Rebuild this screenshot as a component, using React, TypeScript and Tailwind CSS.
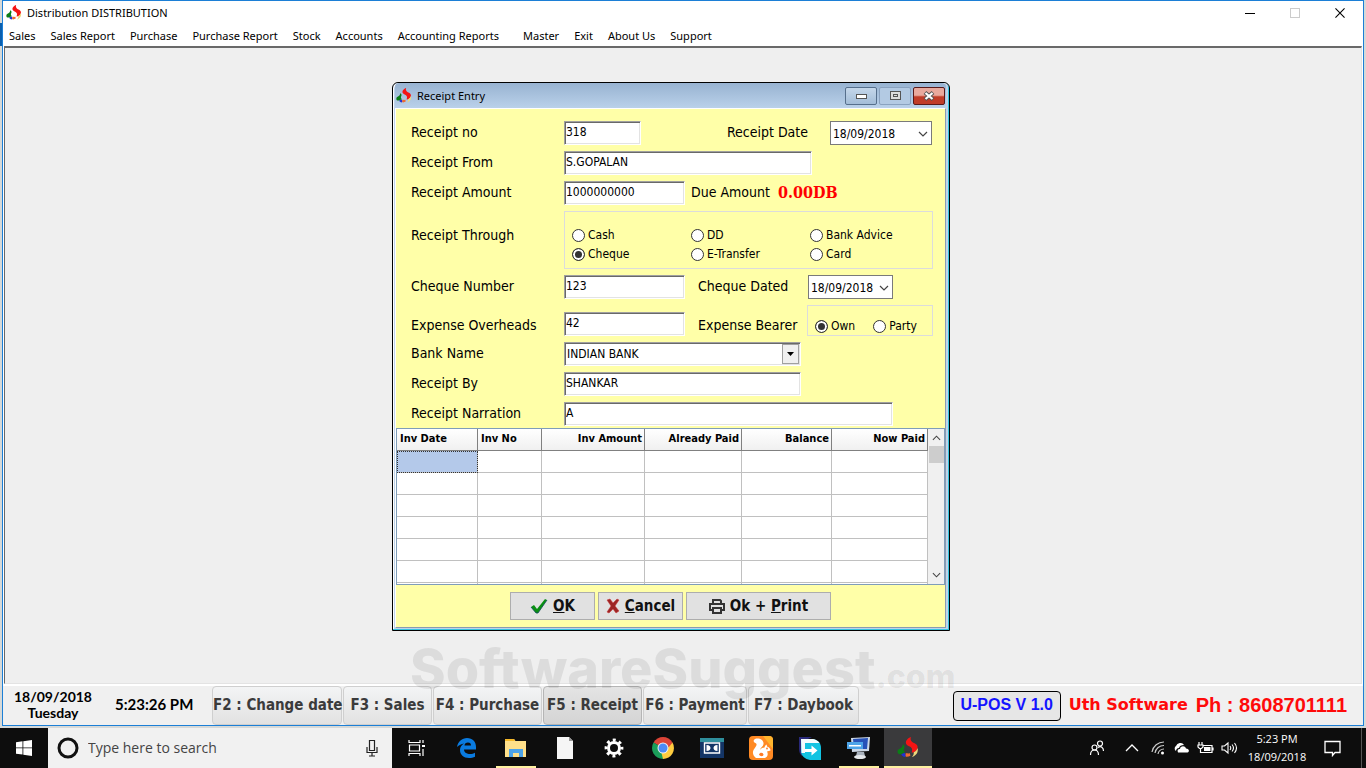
import { useState } from 'react'
import type { ReactNode } from 'react'

const MENUS = [
  'Sales',
  'Sales Report',
  'Purchase',
  'Purchase Report',
  'Stock',
  'Accounts',
  'Accounting Reports',
]
const MENUS_RIGHT = ['Master', 'Exit', 'About Us', 'Support']

const METHODS = ['Cash', 'DD', 'Bank Advice', 'Cheque', 'E-Transfer', 'Card']

const COLUMNS = [
  { name: 'Inv Date', className: 'w-[81px] text-left' },
  { name: 'Inv No', className: 'w-[64px] text-left' },
  { name: 'Inv Amount', className: 'w-[103px] text-right' },
  { name: 'Already Paid', className: 'w-[97px] text-right' },
  { name: 'Balance', className: 'w-[90px] text-right' },
  { name: 'Now Paid', className: 'w-[96px] text-right' },
]

const SHORTCUTS = [
  { label: 'F2 : Change date', className: 'w-[130px]' },
  { label: 'F3 : Sales', className: 'w-[89px]' },
  { label: 'F4 : Purchase', className: 'w-[109px]' },
  { label: 'F5 : Receipt', className: 'w-[99px]', active: true },
  { label: 'F6 : Payment', className: 'w-[104px]' },
  { label: 'F7 : Daybook', className: 'w-[111px]' },
]

const FIELD =
  'h-6 rounded-none border border-t-[#a0a0a0] border-r-white border-b-white border-l-[#a0a0a0] bg-white shadow-[inset_1px_1px_#696969,inset_-1px_-1px_#e3e3e3] outline-none'

function AppLogo({ className }: { className: string }) {
  return (
    <svg viewBox="0 0 23 23" className={className} aria-hidden="true">
      <path
        d="M14.500 0c-3 1-6 4-5 7 1 2.500 5 2.500 6 5 .6 1.500.3 3-.3 4.500 3-.5 6-2 6.300-5.500.2-3-2-4-4.500-5-2-1-3.500-3-2.500-6z"
        fill="#f51414"
      />
      <path d="M21.500 11.500c1 4-1 8-6 9.500 2-2 2-3 2-5 2-1 3.500-2.500 4-4.500z" fill="#ecd97c" />
      <path d="M6 7.500c2 1 2.300 2.500 1.500 4.500-.8 1.600-.5 3 1 4L4.500 18C2 18.500.3 17.500.5 15c.2-2 2-2.500 3.500-3.500C5.500 10.500 6 9 6 7.500z" fill="#0a7d16" />
      <path d="M4.500 18l3.500-1.500 1.500 3-1.500 1.500c-1.500-.5-3-1.500-3.500-3z" fill="#2032d0" />
      <path d="M9 17c1.500 0 3 .3 4.500 0l.5 2.500c-1.500 1-3.500 1.500-5 1z" fill="#ee6a30" />
    </svg>
  )
}

function Chevron({ className }: { className: string }) {
  return (
    <svg viewBox="0 0 10 6" className={className} fill="none" stroke="#444" strokeWidth="1.200" aria-hidden="true">
      <path d="M1 1l4 4 4-4" />
    </svg>
  )
}

function Row({
  label,
  htmlFor,
  labelClass = 'pb-[2px]',
  children,
}: {
  label: string
  htmlFor?: string
  labelClass?: string
  children: ReactNode
}) {
  return (
    <div className="flex items-center">
      <label htmlFor={htmlFor} className={`w-[153px] shrink-0 ${labelClass}`}>
        {label}
      </label>
      {children}
    </div>
  )
}

function TextField({ id, value, className }: { id: string; value: string; className: string }) {
  return <input id={id} type="text" defaultValue={value} className={`${FIELD} px-px pb-[2px] text-xs ${className}`} />
}

function DateField({ id, className }: { id: string; className: string }) {
  return (
    <div className={`relative ${className}`}>
      <select id={id} className="h-6 w-full appearance-none border border-[#7a7a7a] bg-white pt-px pl-0.5 text-xs outline-none">
        <option>18/09/2018</option>
      </select>
      <Chevron className="pointer-events-none absolute top-[10px] right-1 h-[6px] w-[10px]" />
    </div>
  )
}

function Radio({
  name,
  label,
  checked,
  onSelect,
}: {
  name: string
  label: string
  checked: boolean
  onSelect: () => void
}) {
  return (
    <label className="flex items-center gap-[3px] text-xs leading-4">
      <input
        type="radio"
        name={name}
        checked={checked}
        onChange={onSelect}
        className="size-[13px] appearance-none rounded-full border border-[#333] bg-white checked:bg-[#333] checked:shadow-[inset_0_0_0_2px_white]"
      />
      {label}
    </label>
  )
}

function InvoiceGrid() {
  return (
    <div className="flex h-[157px] overflow-hidden border border-[#7f9db9] bg-white">
      <div className="w-[531px] shrink-0 overflow-hidden">
        <table className="w-[531px] table-fixed border-separate border-spacing-0 text-[11px]">
          <thead>
            <tr>
              {COLUMNS.map((column) => (
                <th
                  key={column.name}
                  className={`h-[22px] border-r border-b border-[#808080] bg-linear-to-b from-white to-[#f0f0f0] pt-0 pr-[2px] pb-0 pl-[3px] font-bold ${column.className}`}
                >
                  {column.name}
                </th>
              ))}
            </tr>
          </thead>
          <tbody>
            {[0, 1, 2, 3, 4, 5, 6].map((row) => (
              <tr key={row}>
                {COLUMNS.map((column, index) => (
                  <td
                    key={column.name}
                    className={`h-[22px] border-r border-b border-[#c0c0c0] p-0 ${
                      row === 0 && index === 0 ? 'bg-[#b4c9ea] outline-1 -outline-offset-1 outline-dotted outline-[#333]' : ''
                    }`}
                  />
                ))}
              </tr>
            ))}
          </tbody>
        </table>
      </div>
      <div className="flex flex-1 flex-col items-center bg-[#f0f0f0] py-1.5">
        <Chevron className="h-[6px] w-[9px] rotate-180" />
        <div className="mt-[5px] h-[17px] w-[15px] bg-[#cdcdcd]" />
        <Chevron className="mt-auto h-[6px] w-[9px]" />
      </div>
    </div>
  )
}

function DialogButton({ className, icon, children }: { className: string; icon: ReactNode; children: ReactNode }) {
  return (
    <button
      type="button"
      className={`flex h-7 items-center justify-center gap-[5px] border border-[#adadad] bg-[#e1e1e1] text-[15px] font-bold text-[#111] ${className}`}
    >
      {icon}
      <span>{children}</span>
    </button>
  )
}

function ReceiptDialog() {
  const [method, setMethod] = useState('Cheque')
  const [bearer, setBearer] = useState('Own')

  return (
    <section className="absolute top-[34px] left-[387px] w-[558px] rounded-t-md border border-black bg-[#bfd4ea] pr-[3px] pb-[2px] pl-[2px] shadow-[inset_-1px_-1px_#35c5e0,inset_1px_1px_white]">
      <header className="flex h-[25px] items-center rounded-t bg-linear-to-b from-[#98b3d1] to-[#bad1ea] pr-px pl-px">
        <AppLogo className="size-4" />
        <h1 className="ml-[5px] flex-1 font-['Noto_Sans',sans-serif] text-[11px] leading-4">Receipt Entry</h1>
        <div className="flex gap-[2px]">
          <button
            type="button"
            aria-label="Minimize"
            className="flex h-[18px] w-8 items-center justify-center rounded-xs border border-[#566f8c] bg-linear-to-b from-[#c5d7ea] to-[#a3bdd8]"
          >
            <span className="mt-0.5 h-[5px] w-[11px] border border-[#555] bg-white" />
          </button>
          <button
            type="button"
            aria-label="Maximize"
            className="flex h-[18px] w-8 items-center justify-center rounded-xs border border-[#8aa2bf] bg-[#b3cae3]"
          >
            <span className="flex h-[9px] w-[11px] items-center justify-center border border-[#555] bg-[#ddd]">
              <span className="h-[3px] w-[5px] border border-[#555]" />
            </span>
          </button>
          <button
            type="button"
            aria-label="Close"
            className="flex h-[18px] w-8 items-center justify-center rounded-xs border border-[#5a1a1a] bg-linear-to-b from-[#e9a99d] from-45% to-[#c03c28] to-55%"
          >
            <svg viewBox="0 0 12 10" className="h-[10px] w-3">
              <path d="M2 1.500l8 7M10 1.500l-8 7" stroke="#555" strokeWidth="4" />
              <path d="M2.500 2l7 6M9.500 2l-7 6" stroke="#fff" strokeWidth="2.200" />
            </svg>
          </button>
        </div>
      </header>

      <form className="border border-t-white border-r-[#8a9bb0] border-b-[#8a9bb0] border-l-white bg-[#ffffa8]">
        <div className="flex flex-col gap-[6px] pt-3 pr-3 pl-[15px] text-sm leading-5">
          <Row label="Receipt no" htmlFor="receipt-no">
            <TextField id="receipt-no" value="318" className="w-[77px]" />
            <label htmlFor="receipt-date" className="mr-[22px] ml-auto pb-[2px]">
              Receipt Date
            </label>
            <DateField id="receipt-date" className="mr-px w-[102px]" />
          </Row>
          <Row label="Receipt From" htmlFor="receipt-from">
            <TextField id="receipt-from" value="S.GOPALAN" className="w-[248px]" />
          </Row>
          <Row label="Receipt Amount" htmlFor="receipt-amount">
            <TextField id="receipt-amount" value="1000000000" className="w-[121px]" />
            <span className="ml-[6px] pb-[2px]">Due Amount</span>
            <output className="ml-[8px] font-['DejaVu_Serif_Condensed','DejaVu_Serif',serif] text-base font-bold text-[#ff0000]">
              0.00DB
            </output>
          </Row>
          <Row label="Receipt Through" labelClass="pb-[10px]">
            <div className="grid h-[58px] flex-1 grid-cols-[119px_119px_1fr] content-end gap-y-[3px] border border-[#dcdcdc] pb-[6px] pl-[7px]">
              {METHODS.map((name) => (
                <Radio
                  key={name}
                  name="method"
                  label={name}
                  checked={method === name}
                  onSelect={() => setMethod(name)}
                />
              ))}
            </div>
          </Row>
          <Row label="Cheque Number" htmlFor="cheque-no">
            <TextField id="cheque-no" value="123" className="w-[121px]" />
            <label htmlFor="cheque-date" className="ml-[13px] w-[110px] pb-[2px]">
              Cheque Dated
            </label>
            <DateField id="cheque-date" className="w-[85px]" />
          </Row>
          <div className="flex h-[31px] items-end">
            <label htmlFor="expense" className="w-[153px] pb-px">
              Expense Overheads
            </label>
            <TextField id="expense" value="42" className="w-[121px]" />
            <span className="ml-[13px] w-[109px] pb-px">Expense Bearer</span>
            <div className="flex h-[31px] flex-1 items-end gap-[18px] border border-[#dcdcdc] pb-px pl-[7px]">
              {['Own', 'Party'].map((name) => (
                <Radio
                  key={name}
                  name="bearer"
                  label={name}
                  checked={bearer === name}
                  onSelect={() => setBearer(name)}
                />
              ))}
            </div>
          </div>
          <Row label="Bank Name" htmlFor="bank">
            <div className="relative w-[237px]">
              <select id="bank" className={`${FIELD} w-full appearance-none pl-[2px] text-xs`}>
                <option>INDIAN BANK</option>
              </select>
              <span className="pointer-events-none absolute top-[2px] right-[2px] flex h-5 w-[17px] items-center justify-center border border-[#a0a0a0] bg-[#f0f0f0]">
                <svg viewBox="0 0 7 4" className="h-1 w-[7px]">
                  <path d="M0 0h7L3.500 4z" />
                </svg>
              </span>
            </div>
          </Row>
          <Row label="Receipt By" htmlFor="receipt-by">
            <TextField id="receipt-by" value="SHANKAR" className="w-[237px]" />
          </Row>
          <Row label="Receipt Narration" htmlFor="narration">
            <TextField id="narration" value="A" className="w-[329px]" />
          </Row>
        </div>

        <div className="mt-[2px]">
          <InvoiceGrid />
        </div>

        <div className="flex justify-center gap-[3px] py-[7px]">
          <DialogButton
            className="w-[85px]"
            icon={
              <svg viewBox="0 0 18 16" className="h-4 w-[18px]">
                <path d="M1 9l3-2 3 4L15 1l2 1L8 15H6z" fill="#0a8f12" />
                <path d="M1 9l5 6h2l9-13" fill="none" stroke="#124a5e" strokeWidth=".8" />
              </svg>
            }
          >
            <u>O</u>K
          </DialogButton>
          <DialogButton
            className="w-[85px]"
            icon={
              <svg viewBox="0 0 14 16" className="h-4 w-[14px]">
                <path d="M1 2l3-1 3 4 4-4 2 1-4 6 4 5-3 2-3-4-4 4-2-1 4-6z" fill="#9c2424" stroke="#c33" strokeWidth=".5" />
              </svg>
            }
          >
            <u>C</u>ancel
          </DialogButton>
          <DialogButton
            className="w-[145px]"
            icon={
              <svg viewBox="0 0 16 16" className="size-4" fill="none" stroke="#333" strokeWidth="2">
                <path d="M4 6V2h7l1 1v3M4 12H1V6h14v6h-3M4 10h8v5H4z" />
              </svg>
            }
          >
            Ok + <u>P</u>rint
          </DialogButton>
        </div>
      </form>
    </section>
  )
}

function StatusBar() {
  return (
    <footer className="flex h-[41px] items-center border-t-2 border-white bg-[#f0f0f0] pr-4">
      <div className="w-[100px] pb-[2px] text-center font-[Lato,sans-serif] text-sm leading-4 font-bold">
        18/09/2018
        <br />
        Tuesday
      </div>
      <time className="w-[109px] pb-[2px] pl-3 font-[Lato,sans-serif] text-[15px] font-bold whitespace-nowrap">
        5:23:26 PM
      </time>
      <div className="flex gap-px">
        {SHORTCUTS.map((item) => (
          <button
            key={item.label}
            type="button"
            className={`h-[39px] rounded-sm border text-[15px] font-bold whitespace-nowrap text-[#3b3b3b] ${
              item.active
                ? 'border-[#b5b5b5] bg-linear-to-b from-[#e4e4e4] to-[#d4d4d4]'
                : 'border-[#cfcfcf] bg-linear-to-b from-[#f3f4f5] to-[#e2e2e2]'
            } ${item.className}`}
          >
            {item.label}
          </button>
        ))}
      </div>
      <div className="ml-auto flex items-center gap-2 font-bold whitespace-nowrap text-[#ff0a0a]">
        <span className="flex h-[30px] w-[108px] items-center justify-center rounded border border-black bg-[#e6e6e6] pb-[2px] font-['Liberation_Sans',sans-serif] text-base text-[#1414ff]">
          U-POS V 1.0
        </span>
        <span className="pb-[2px] font-['DejaVu_Sans',sans-serif] text-base">Uth Software</span>
        <span className="pb-[2px] font-['Liberation_Sans',sans-serif] text-xl">Ph : 8608701111</span>
      </div>
    </footer>
  )
}

const TASK_ICONS: { name: string; icon: ReactNode; open?: boolean; active?: boolean }[] = [
  {
    name: 'Task view',
    icon: (
      <g fill="none" stroke="#fff" strokeWidth="1.200">
        <path d="M4 4v2.500h11V4M4 20v-2.500h11V20M4.500 9h10v6h-10zM18 4v3M18 13v7" />
        <path d="M17 9h3v2h-3z" fill="#fff" stroke="none" />
      </g>
    ),
  },
  {
    name: 'Edge',
    icon: (
      <path
        d="M2 11C3 5.500 7 2 12 2c5.500 0 9 3.500 9 9v2.500H9c0 3 3 4.500 6 4.500 2 0 3.700-.5 5-1.300v4C18.500 21.500 16 22 14 22c-5.500 0-9-3.500-9-8 0-3 1.500-5 4-6.500C6.500 8 4 9 2 11zm7.500-1.500H16c0-1.800-1-3-3-3s-3.500 1.200-3.500 3z"
        fill="#0a7be0"
      />
    ),
  },
  {
    name: 'File Explorer',
    open: true,
    icon: (
      <>
        <path d="M1 3h9l1.500 2H22v16H1z" fill="#ffe08a" />
        <path d="M1 3h9l1 2H1z" fill="#f6b929" />
        <path d="M5 21v-8h14v8h-4v-4H9v4z" fill="#4da3e8" />
      </>
    ),
  },
  {
    name: 'Document',
    icon: (
      <>
        <path d="M4 1h12l4 4v18H4z" fill="#f5f5f5" />
        <path d="M16 1v4h4z" fill="#999" />
      </>
    ),
  },
  {
    name: 'Settings',
    icon: (
      <g fill="none" stroke="#fff">
        <circle cx="12" cy="12" r="5.500" strokeWidth="3" />
        <circle cx="12" cy="12" r="8" strokeWidth="2.800" strokeDasharray="3 3.283" strokeDashoffset="1.500" />
      </g>
    ),
  },
  {
    name: 'Chrome',
    icon: (
      <>
        <path d="M12 12L2.500 6.500A11 11 0 0 1 21.500 6.500z" fill="#dc4437" />
        <path d="M12 12L21.500 6.500A11 11 0 0 1 12 23z" fill="#ffcd40" />
        <path d="M12 12v11A11 11 0 0 1 2.500 6.500z" fill="#1b9e5a" />
        <path d="M12 6.500h9.500l-4 5z" fill="#dc4437" />
        <path d="M16.500 15L12 23l-1.500-6z" fill="#ffcd40" />
        <circle cx="12" cy="12" r="5.500" fill="#f1f1f1" />
        <circle cx="12" cy="12" r="4.500" fill="#4c8bf5" />
      </>
    ),
  },
  {
    name: 'Dolby',
    icon: (
      <>
        <path d="M0 2h24v20H0z" fill="#143566" />
        <path d="M0 2h24v4H0z" fill="#2f8f9d" />
        <path d="M4.500 7h15v10h-15z" fill="none" stroke="#fff" strokeWidth="1.400" />
        <path d="M6.500 9c3 0 4 1.500 4 3s-1 3-4 3zM17.500 9c-3 0-4 1.500-4 3s1 3 4 3z" fill="#fff" />
      </>
    ),
  },
  {
    name: 'UC Browser',
    icon: (
      <>
        <rect width="24" height="24" rx="4" fill="#ff8a24" />
        <path d="M14 0h6a4 4 0 0 1 4 4v9z" fill="#ffb52e" />
        <path
          d="M6 3c4-1.500 9 1 8.500 5-.3 2.500-3 3.500-3.500 6 1-1.500 2.500-2.500 4.500-2.500.3-1.500 1-2.500 2-3l.8 2.200c2 .5 3.200 2 3.200 3.800l-3.500 1c1.500 2.500.5 5.500-2 6.500H7c-3.500-2.500-4-6.500-1.500-9.500 2-2.500 3-4.500 1-5.500C5 6.500 3.500 5 6 3z"
          fill="#fff"
        />
        <path d="M10 18.500c1-2.500 4.500-2 4.500.5-1 1.800-3.500 1.500-4.500-.5z" fill="#ff7a24" />
        <circle cx="18" cy="12.500" r=".9" fill="#ff7a24" />
      </>
    ),
  },
  {
    name: 'Transfer',
    icon: (
      <>
        <path d="M1 1h13l-6 3-4 16c-2-2-3-4-3-7z" fill="#29297a" />
        <path d="M3 3h12c5 1 8 4 8 9v12H12c-5-1-9-4-9-9z" fill="#12c3e2" />
        <path d="M3 3h12c3 .5 5 2 6.500 4H7v10H3.500z" fill="#f4fbfd" />
        <path d="M7 13h6.500V9.500l6 5-6 5V16H7z" fill="#fff" />
      </>
    ),
  },
  {
    name: 'Remote desktop',
    open: true,
    icon: (
      <>
        <path d="M4 2l19-1-1 14-17 1z" fill="#cdd8e6" />
        <path d="M6 3l15-1-1 11H7z" fill="#2752b8" />
        <path d="M0 6h16v7H0z" fill="#4da4e8" />
        <path d="M2 9h12v1.500H2z" fill="#fff" />
        <path d="M10 16h7l1 4H9z" fill="#aab3be" />
        <ellipse cx="13" cy="21" rx="6" ry="2" fill="#e4e7ea" />
      </>
    ),
  },
  { name: 'Distribution', icon: null, open: true, active: true },
]

function Taskbar() {
  return (
    <nav aria-label="Taskbar" className="flex h-10 bg-[#0d0d0d] font-['Open_Sans',sans-serif] text-white">
      <button type="button" aria-label="Start" className="flex w-12 items-center justify-center">
        <svg viewBox="0 0 16 16" className="size-4" fill="#fff">
          <path d="M0 2.200l6.500-.9v6.200H0zM7.300 1.200L16 0v7.500H7.300zM0 8.300h6.500v6.300L0 13.700zM7.300 8.300H16V16l-8.700-1.200z" />
        </svg>
      </button>
      <div className="flex w-[344px] items-center bg-[#f1f1f1] pr-3 pl-[9px]">
        <svg viewBox="0 0 22 22" className="mr-[9px] size-[22px]">
          <circle cx="11" cy="11" r="9" fill="none" stroke="#111" strokeWidth="3" />
        </svg>
        <input
          type="search"
          aria-label="Search"
          placeholder="Type here to search"
          className="min-w-0 flex-1 bg-transparent text-sm outline-none placeholder:text-[#444]"
        />
        <svg viewBox="0 0 16 18" className="h-[18px] w-4" fill="none" stroke="#222" strokeWidth="1.200">
          <path d="M5.500 1.500h5v10h-5zM3 8v5.500h10V8M8 13.500V17M5 17h6" />
        </svg>
      </div>
      <div className="flex gap-px">
        {TASK_ICONS.map((task) => (
          <button
            key={task.name}
            type="button"
            aria-label={task.name}
            className={`relative flex w-12 items-center justify-center first:w-[50px] ${task.active ? 'bg-[#3a3a3c]' : ''}`}
          >
            {task.icon ? (
              <svg viewBox="0 0 24 24" className="size-6">
                {task.icon}
              </svg>
            ) : (
              <AppLogo className="size-[22px]" />
            )}
            {task.open && (
              <span
                className={`absolute bottom-0 h-[2px] bg-[#fdf0a0] ${task.active ? 'inset-x-0' : 'inset-x-1'}`}
              />
            )}
          </button>
        ))}
      </div>
      <div className="ml-auto flex items-center border-r border-[#555] pr-5">
        <svg viewBox="0 0 16 16" className="size-4" fill="none" stroke="#fff" strokeWidth="1.200">
          <circle cx="5.500" cy="7.500" r="2.500" />
          <circle cx="11" cy="3.500" r="2.500" />
          <path d="M1.500 15c0-3 1.500-5 4-5s4 2 4 5M9 7.500c3-2 5.500 0 5.500 3.500" />
        </svg>
        <svg viewBox="0 0 14 8" className="ml-5 h-2 w-[14px]" fill="none" stroke="#fff" strokeWidth="1.300">
          <path d="M1 7l6-6 6 6" />
        </svg>
        <svg viewBox="0 0 14 14" className="ml-3 size-[14px]" fill="none" stroke="#ccc" strokeWidth="1.200">
          <path d="M1 11A12 12 0 0 1 13 1M4 12A9 9 0 0 1 13 4.500M7 13a6 6 0 0 1 6-5" />
          <circle cx="11.500" cy="12" r="1.500" fill="#fff" stroke="none" />
        </svg>
        <svg viewBox="0 0 16 10" className="ml-2 h-[10px] w-4" fill="#fff">
          <path d="M3 8a3 3 0 0 1 0-5 4.500 4.500 0 0 1 8-1C8 2 6.500 3 6 5 4 5 3 6.500 3 8zM5 9.500C4 7 5 6 7 6c0-3 5-4 6-.5 3 0 4 3 1.500 4z" />
        </svg>
        <svg viewBox="0 0 17 14" className="ml-2 h-[14px] w-[17px]" fill="none" stroke="#fff" strokeWidth="1.200">
          <path d="M6 4.500h9v7H4M16 6.500v3M2 1v3M5 1v3M1 4h5v2L4.500 7.500h-2L1 6zM3.500 8v4" />
          <path d="M7 6h6.500v4H7z" fill="#fff" stroke="none" />
        </svg>
        <svg viewBox="0 0 17 14" className="ml-[7px] h-[14px] w-[17px]" fill="none" stroke="#fff" strokeWidth="1.100">
          <path d="M1 5h2.500L7 2v10L3.500 9H1zM9 5q1.500 2 0 4M11 3.500q3 3.500 0 7M13.500 2q4 5 0 10" />
        </svg>
        <div className="ml-2 w-[62px] text-center text-[11px] leading-[18px] whitespace-nowrap">
          5:23 PM
          <br />
          18/09/2018
        </div>
        <svg viewBox="0 0 17 17" className="ml-4 size-[17px]" fill="none" stroke="#fff" strokeWidth="1.300">
          <path d="M1 1.500h15v11h-5L8.500 15.500V12.500H1z" />
        </svg>
      </div>
      <div className="w-1" />
    </nav>
  )
}

function Menu({ items }: { items: string[] }) {
  return (
    <div className="flex gap-[15px]">
      {items.map((item) => (
        <button key={item} type="button" className="whitespace-nowrap">
          {item}
        </button>
      ))}
    </div>
  )
}

export default function App() {
  return (
    <div className="relative flex h-screen min-h-[740px] flex-col overflow-hidden bg-[#d6d9d8] font-['DejaVu_Sans_Condensed','DejaVu_Sans',sans-serif] text-black">
      {/* sliver of the window behind */}
      <div className="absolute top-[23px] left-0 h-[23px] w-[2px] bg-[#0a5fae]" />
      <div className="relative mr-[2px] mb-[2px] ml-[2px] flex flex-1 flex-col border border-[#1c7fd6] bg-white">
        <header className="font-['Noto_Sans',sans-serif] text-[11px] leading-4">
          <div className="flex h-6 items-center pr-[18px] pl-[3px]">
            <AppLogo className="size-4" />
            <h1 className="ml-[5px] flex-1">Distribution DISTRIBUTION</h1>
            <div className="flex items-center gap-[35px]">
              <button type="button" aria-label="Minimize window">
                <span className="block h-px w-[10px] bg-black" />
              </button>
              <button type="button" aria-label="Maximize window">
                <span className="block size-[10px] border border-[#ccc]" />
              </button>
              <button type="button" aria-label="Close window">
                <svg viewBox="0 0 11 11" className="size-[10px]" stroke="#000" strokeWidth="1.200">
                  <path d="M.5.5l10 10M10.500.5l-10 10" />
                </svg>
              </button>
            </div>
          </div>
          <nav aria-label="Main menu" className="flex h-[21px] items-center gap-6 pl-[6px]">
            <Menu items={MENUS} />
            <Menu items={MENUS_RIGHT} />
          </nav>
        </header>
        <main className="relative mr-px ml-px flex-1 border border-t-2 border-t-[#696969] border-r-[#e3e3e3] border-b-[#e3e3e3] border-l-[#696969] bg-[#efefef]">
          <ReceiptDialog />
        </main>
        <StatusBar />
        <div className="pointer-events-none absolute bottom-[18px] left-[407px] font-[Inter,sans-serif] text-[54px] leading-[60px] font-extrabold whitespace-nowrap text-black/8">
          SoftwareSuggest<span className="text-[32px]">.com</span>
        </div>
      </div>
      <Taskbar />
    </div>
  )
}
